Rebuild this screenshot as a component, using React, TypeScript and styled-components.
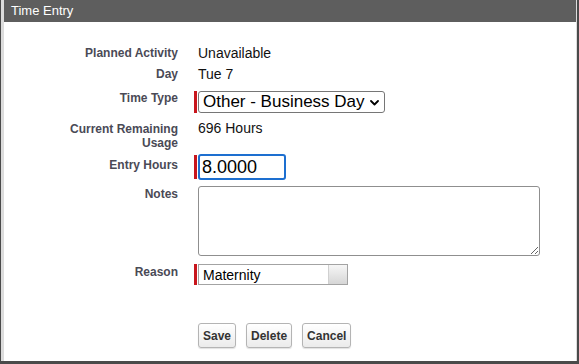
import React from 'react';
import styled, { createGlobalStyle } from 'styled-components';

const GlobalStyle = createGlobalStyle`
  html, body {
    margin: 0;
    padding: 0;
    background: #fff;
  }
  body {
    font-family: 'Liberation Sans', Arial, Helvetica, sans-serif;
  }
  * {
    box-sizing: border-box;
  }
`;

const Frame = styled.div`
  width: 579px;
  height: 364px;
  border-left: 1px solid #4a4a4a;
  border-right: 2px solid #4a4a4a;
  border-bottom: 3px solid #4a4a4a;
`;

const Window = styled.div`
  height: 100%;
  display: flex;
  flex-direction: column;
  background: #fff;
  border-left: 3px solid #dcdcdc;
  border-right: 1px solid #dcdcdc;
`;

const Header = styled.div`
  height: 22px;
  line-height: 22px;
  padding-left: 7px;
  background: #5e5e5e;
  color: #fff;
  font-size: 13px;
  flex: none;
`;

const Form = styled.form`
  padding: 23px 0 0 54px;
  display: flex;
  flex-direction: column;
`;

const Row = styled.div<{ $top?: number }>`
  display: flex;
  align-items: flex-start;
  margin-top: ${p => p.$top ?? 0}px;
`;

const Label = styled.div<{ $pad?: number }>`
  width: 120px;
  flex: none;
  text-align: right;
  font-size: 12px;
  font-weight: bold;
  line-height: 14px;
  color: #4a4a56;
  padding-top: ${p => p.$pad ?? 1}px;
`;

const Cell = styled.div<{ $required?: boolean }>`
  margin-left: 16px;
  display: flex;
  align-items: stretch;
  border-left: ${p => (p.$required ? '3px solid #c8161d' : '3px solid transparent')};
  padding-left: 1px;
`;

const Value = styled.div`
  font-size: 14px;
  line-height: 17px;
  color: #111;
`;

const SelectWrap = styled.div`
  position: relative;
  display: flex;
`;

const TypeSelect = styled.select`
  appearance: none;
  -webkit-appearance: none;
  width: 187px;
  height: 22px;
  margin: 0;
  padding: 0 18px 0 4px;
  border: 1px solid #767676;
  border-radius: 3px;
  background: #fff;
  color: #000;
  font-family: 'Liberation Sans', Arial, sans-serif;
  font-size: 17px;
  line-height: 20px;
`;

const Chevron = styled.svg`
  position: absolute;
  right: 6px;
  top: 9px;
  pointer-events: none;
`;

const HoursInput = styled.input`
  width: 88px;
  height: 26px;
  margin: -1px 0;
  padding: 0 0 0 2px;
  border: 2px solid #1d6fd0;
  border-radius: 3px;
  outline: none;
  font-family: 'Liberation Sans', Arial, sans-serif;
  font-size: 18px;
  color: #000;
`;

const Notes = styled.textarea`
  width: 342px;
  height: 70px;
  margin: 0;
  border: 1px solid #8f8f8f;
  border-radius: 3px;
  font-family: 'Liberation Sans', Arial, sans-serif;
  font-size: 13px;
`;

const ReasonSelect = styled.select`
  appearance: none;
  -webkit-appearance: none;
  width: 150px;
  height: 21px;
  margin: 0;
  padding: 0 22px 0 4px;
  border: 1px solid #a3a3a3;
  border-radius: 0;
  background: #fff;
  color: #000;
  font-family: 'Liberation Sans', Arial, sans-serif;
  font-size: 14px;
`;

const ReasonKnob = styled.span`
  position: absolute;
  right: 1px;
  top: 1px;
  bottom: 1px;
  width: 19px;
  border-left: 1px solid #d0d0d0;
  background: linear-gradient(#f6f6f6, #d6d6d6);
  pointer-events: none;
`;

const Buttons = styled.div`
  display: flex;
  gap: 10px;
`;

const Button = styled.button`
  height: 25px;
  padding: 0 4px;
  border: 1px solid #b4b4b4;
  border-radius: 3px;
  background: linear-gradient(#ffffff, #ebebeb);
  box-shadow: 0 1px 1px rgba(0, 0, 0, 0.12);
  color: #333;
  font-family: 'Liberation Sans', Arial, sans-serif;
  font-size: 12px;
  font-weight: bold;
  cursor: pointer;
`;

const App: React.FC = () => {
  return (
    <>
      <GlobalStyle />
      <Frame>
        <Window>
          <Header>Time Entry</Header>
          <Form onSubmit={e => e.preventDefault()}>
            <Row>
              <Label>Planned Activity</Label>
              <Cell>
                <Value>Unavailable</Value>
              </Cell>
            </Row>
            <Row $top={4}>
              <Label>Day</Label>
              <Cell>
                <Value>Tue 7</Value>
              </Cell>
            </Row>
            <Row $top={8}>
              <Label $pad={0}>Time Type</Label>
              <Cell $required>
                <SelectWrap>
                  <TypeSelect defaultValue="other">
                    <option value="other">Other - Business Day</option>
                  </TypeSelect>
                  <Chevron width="9" height="6" viewBox="0 0 9 6">
                    <path d="M1 1 L4.5 4.5 L8 1" fill="none" stroke="#000" strokeWidth="1.8" strokeLinecap="round" strokeLinejoin="round" />
                  </Chevron>
                </SelectWrap>
              </Cell>
            </Row>
            <Row $top={7}>
              <Label $pad={2}>Current Remaining Usage</Label>
              <Cell>
                <Value>696 Hours</Value>
              </Cell>
            </Row>
            <Row $top={5}>
              <Label $pad={3}>Entry Hours</Label>
              <Cell $required>
                <HoursInput defaultValue="8.0000" />
              </Cell>
            </Row>
            <Row $top={7}>
              <Label $pad={1}>Notes</Label>
              <Cell>
                <Notes />
              </Cell>
            </Row>
            <Row $top={8}>
              <Label $pad={1}>Reason</Label>
              <Cell $required>
                <SelectWrap>
                  <ReasonSelect defaultValue="maternity">
                    <option value="maternity">Maternity</option>
                  </ReasonSelect>
                  <ReasonKnob />
                </SelectWrap>
              </Cell>
            </Row>
            <Row $top={38}>
              <Label />
              <Cell>
                <Buttons>
                  <Button type="submit">Save</Button>
                  <Button type="button">Delete</Button>
                  <Button type="button">Cancel</Button>
                </Buttons>
              </Cell>
            </Row>
          </Form>
        </Window>
      </Frame>
    </>
  );
};

export default App;
